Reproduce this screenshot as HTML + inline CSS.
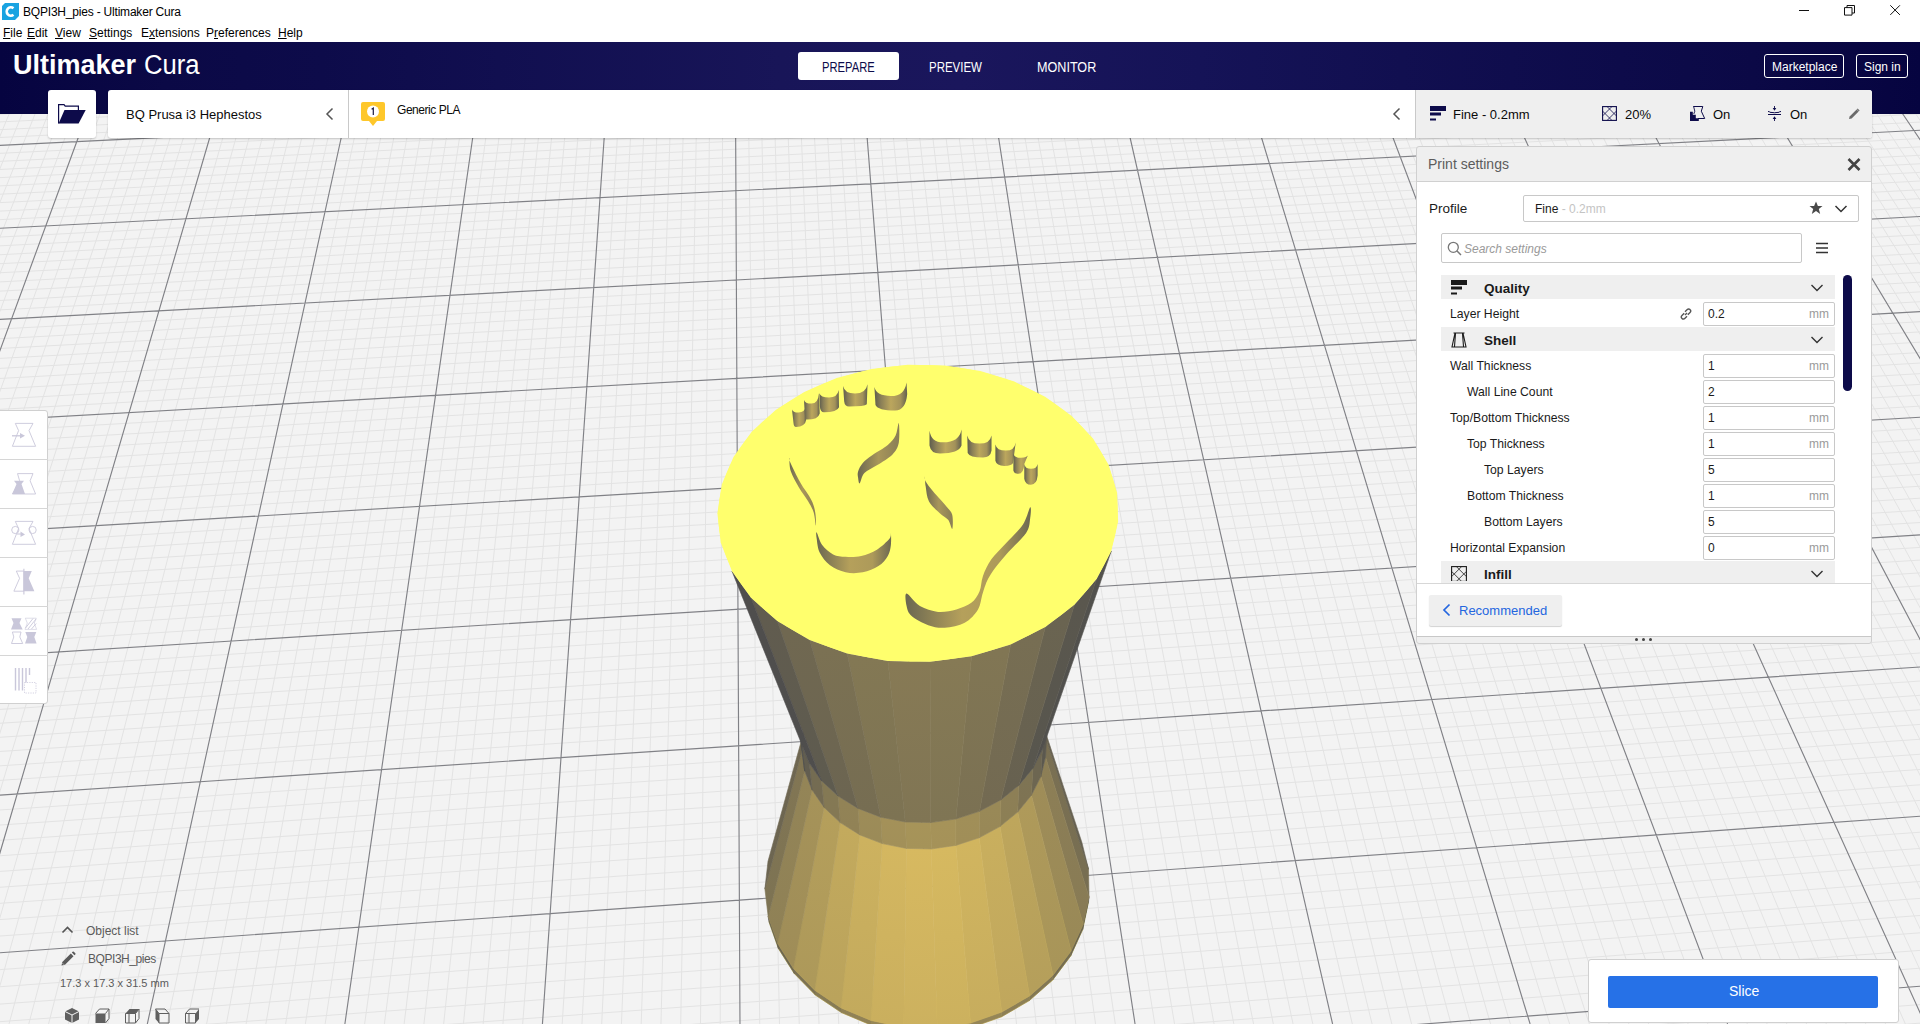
<!DOCTYPE html>
<html><head><meta charset="utf-8"><title>Ultimaker Cura</title>
<style>
*{box-sizing:border-box;margin:0;padding:0}
html,body{width:1920px;height:1024px;overflow:hidden;background:#f3f3f3;font-family:"Liberation Sans",sans-serif;color:#000}
.a{position:absolute}
.t{position:absolute;white-space:nowrap;line-height:1}
#scene{position:absolute;left:0;top:0}
#titlebar{position:absolute;left:0;top:0;width:1920px;height:21px;background:#fff}
#menubar{position:absolute;left:0;top:21px;width:1920px;height:21px;background:#fff}
#header{position:absolute;left:0;top:42px;width:1920px;height:72px;background:linear-gradient(90deg,#060440 0%,#0b0946 8.6%,#0d0b4a 16.7%,#110f50 26%,#181558 40.6%,#1a165c 50%,#151357 62.5%,#110f50 73%,#0d0b4a 84.4%,#0b0946 91.4%,#060440 100%)}
.u{text-decoration:underline;text-underline-offset:1px}
.btnw{position:absolute;border:1px solid #fff;border-radius:3px}
.panel{position:absolute;background:#fff;border:1px solid #d0d0d0;border-radius:3px}
.cat{position:absolute;left:1441px;width:394px;height:24px;background:#efefef}
.inp{position:absolute;left:1703px;width:132px;height:24px;border:1px solid #c8c8c8;border-radius:2px;background:#fff}
.lbl{position:absolute;white-space:nowrap;line-height:1;font-size:12.5px;color:#1a1a1a}
.val{position:absolute;white-space:nowrap;line-height:1;font-size:12px;color:#1a1a1a}
.mm{position:absolute;white-space:nowrap;line-height:1;font-size:12px;color:#9a9a9a}
.tb{position:absolute;left:0;width:48px;height:49px;border-bottom:1px solid #d6d6d6}
</style></head>
<body>
<svg id="scene" width="1920" height="1024" viewBox="0 0 1920 1024">
<path d="M-2.20 110L-386.14 1024M10.75 110L-366.38 1024M23.69 110L-346.62 1024M36.63 110L-326.87 1024M49.58 110L-307.11 1024M62.52 110L-287.35 1024M75.46 110L-267.59 1024M101.35 110L-228.08 1024M114.30 110L-208.32 1024M127.24 110L-188.56 1024M140.18 110L-168.80 1024M153.13 110L-149.04 1024M166.07 110L-129.29 1024M179.01 110L-109.53 1024M191.96 110L-89.77 1024M204.90 110L-70.02 1024M230.79 110L-30.50 1024M243.73 110L-10.74 1024M256.67 110L9.01 1024M269.61 110L28.77 1024M282.56 110L48.53 1024M295.50 110L68.28 1024M308.44 110L88.04 1024M321.39 110L107.80 1024M334.33 110L127.55 1024M360.21 110L167.07 1024M373.16 110L186.82 1024M386.10 110L206.58 1024M399.04 110L226.34 1024M411.99 110L246.09 1024M424.93 110L265.85 1024M437.87 110L285.61 1024M450.81 110L305.36 1024M463.76 110L325.12 1024M489.64 110L364.63 1024M502.58 110L384.39 1024M515.52 110L404.14 1024M528.47 110L423.90 1024M541.41 110L443.65 1024M554.35 110L463.41 1024M567.29 110L483.16 1024M580.23 110L502.92 1024M593.18 110L522.67 1024M619.06 110L562.18 1024M632.00 110L581.94 1024M644.94 110L601.70 1024M657.89 110L621.45 1024M670.83 110L641.21 1024M683.77 110L660.96 1024M696.71 110L680.71 1024M709.65 110L700.47 1024M722.59 110L720.22 1024M748.48 110L759.73 1024M761.42 110L779.49 1024M774.36 110L799.24 1024M787.30 110L819.00 1024M800.24 110L838.75 1024M813.18 110L858.50 1024M826.12 110L878.26 1024M839.06 110L898.01 1024M852.01 110L917.77 1024M877.89 110L957.27 1024M890.83 110L977.03 1024M903.77 110L996.78 1024M916.71 110L1016.54 1024M929.65 110L1036.29 1024M942.59 110L1056.04 1024M955.53 110L1075.80 1024M968.47 110L1095.55 1024M981.41 110L1115.30 1024M1007.29 110L1154.81 1024M1020.24 110L1174.56 1024M1033.18 110L1194.32 1024M1046.12 110L1214.07 1024M1059.06 110L1233.82 1024M1072.00 110L1253.57 1024M1084.94 110L1273.33 1024M1097.88 110L1293.08 1024M1110.82 110L1312.83 1024M1136.70 110L1352.34 1024M1149.64 110L1372.09 1024M1162.58 110L1391.84 1024M1175.52 110L1411.59 1024M1188.46 110L1431.35 1024M1201.40 110L1451.10 1024M1214.34 110L1470.85 1024M1227.28 110L1490.60 1024M1240.22 110L1510.35 1024M1266.10 110L1549.86 1024M1279.04 110L1569.61 1024M1291.97 110L1589.36 1024M1304.91 110L1609.11 1024M1317.85 110L1628.87 1024M1330.79 110L1648.62 1024M1343.73 110L1668.37 1024M1356.67 110L1688.12 1024M1369.61 110L1707.87 1024M1395.49 110L1747.37 1024M1408.43 110L1767.12 1024M1421.37 110L1786.88 1024M1434.31 110L1806.63 1024M1447.25 110L1826.38 1024M1460.18 110L1846.13 1024M1473.12 110L1865.88 1024M1486.06 110L1885.63 1024M1499.00 110L1905.38 1024M1524.88 110L1944.88 1024M1537.82 110L1964.63 1024M1550.76 110L1984.38 1024M1563.70 110L2004.13 1024M1576.63 110L2023.88 1024M1589.57 110L2043.63 1024M1602.51 110L2063.38 1024M1615.45 110L2083.13 1024M1628.39 110L2102.88 1024M1654.26 110L2142.38 1024M1667.20 110L2162.13 1024M1680.14 110L2181.88 1024M1693.08 110L2201.63 1024M1706.02 110L2221.38 1024M1718.95 110L2241.13 1024M1731.89 110L2260.88 1024M1744.83 110L2280.63 1024M1757.77 110L2300.38 1024M1783.64 110L2339.88 1024M1796.58 110L2359.62 1024M1809.52 110L2379.37 1024M1822.46 110L2399.12 1024M1835.40 110L2418.87 1024M1848.33 110L2438.62 1024M1861.27 110L2458.37 1024M1874.21 110L2478.12 1024M1887.15 110L2497.87 1024M1913.02 110L2537.36 1024M0 106.61L1920 15.05M0 114.23L1920 22.26M0 121.91L1920 29.53M0 129.66L1920 36.87M0 137.48L1920 44.27M0 153.32L1920 59.27M0 161.35L1920 66.88M0 169.46L1920 74.55M0 177.63L1920 82.29M0 185.88L1920 90.11M0 194.21L1920 97.99M0 202.62L1920 105.95M0 211.10L1920 113.98M0 219.66L1920 122.09M0 237.03L1920 138.53M0 245.83L1920 146.87M0 254.72L1920 155.29M0 263.69L1920 163.79M0 272.75L1920 172.37M0 281.90L1920 181.03M0 291.14L1920 189.77M0 300.46L1920 198.60M0 309.88L1920 207.52M0 328.99L1920 225.62M0 338.69L1920 234.80M0 348.48L1920 244.08M0 358.38L1920 253.44M0 368.37L1920 262.91M0 378.46L1920 272.46M0 388.66L1920 282.12M0 398.96L1920 291.87M0 409.37L1920 301.73M0 430.51L1920 321.74M0 441.24L1920 331.91M0 452.09L1920 342.18M0 463.05L1920 352.56M0 474.13L1920 363.05M0 485.32L1920 373.65M0 496.64L1920 384.36M0 508.08L1920 395.19M0 519.64L1920 406.14M0 543.14L1920 428.40M0 555.09L1920 439.71M0 567.16L1920 451.14M0 579.38L1920 462.71M0 591.73L1920 474.40M0 604.21L1920 486.23M0 616.84L1920 498.19M0 629.62L1920 510.28M0 642.54L1920 522.51M0 668.83L1920 547.41M0 682.20L1920 560.07M0 695.73L1920 572.88M0 709.42L1920 585.85M0 723.27L1920 598.97M0 737.29L1920 612.24M0 751.48L1920 625.67M0 765.84L1920 639.27M0 780.37L1920 653.03M0 809.97L1920 681.06M0 825.04L1920 695.33M0 840.31L1920 709.78M0 855.76L1920 724.42M0 871.41L1920 739.24M0 887.26L1920 754.24M0 903.31L1920 769.44M0 919.56L1920 784.83M0 936.03L1920 800.42M0 969.61L1920 832.22M0 986.73L1920 848.43M0 1004.08L1920 864.86M0 1021.66L1920 881.51M0 1039.48L1920 898.38M0 1057.54L1920 915.48M0 1075.85L1920 932.82M0 1094.40L1920 950.39M0 1113.22L1920 968.21M0 1151.64L1920 1004.59M0 1171.26L1920 1023.16" stroke="#e3e3e3" stroke-width="1" fill="none"/><path d="M88.41 110L-247.83 1024M217.84 110L-50.26 1024M347.27 110L147.31 1024M476.70 110L344.87 1024M606.12 110L542.43 1024M735.53 110L739.98 1024M864.95 110L937.52 1024M994.35 110L1135.06 1024M1123.76 110L1332.58 1024M1253.16 110L1530.11 1024M1382.55 110L1727.62 1024M1511.94 110L1925.13 1024M1641.33 110L2122.63 1024M1770.71 110L2320.13 1024M1900.08 110L2517.61 1024M0 145.36L1920 51.74M0 228.30L1920 130.27M0 319.39L1920 216.52M0 419.88L1920 311.68M0 531.33L1920 417.21M0 655.61L1920 534.89M0 795.08L1920 666.96M0 952.71L1920 816.22M0 1132.29L1920 986.27" stroke="#808186" stroke-width="1.15" fill="none"/>
<linearGradient id="f1" gradientUnits="userSpaceOnUse" x1="1038.2" y1="916.8" x2="1085.6" y2="915.6"><stop offset="0" stop-color="#fff66b"/><stop offset="1" stop-color="#fff76b"/></linearGradient><path d="M1040.4 907.2L1036.0 926.5L1082.7 929.5L1088.5 901.9Z" fill="url(#f1)" stroke="url(#f1)" stroke-width="0.6"/><linearGradient id="f2" gradientUnits="userSpaceOnUse" x1="1031.6" y1="935.6" x2="1076.7" y2="942.7"><stop offset="0" stop-color="#fff16a"/><stop offset="1" stop-color="#fff26a"/></linearGradient><path d="M1036.0 926.5L1027.3 944.8L1070.7 955.9L1082.7 929.5Z" fill="url(#f2)" stroke="url(#f2)" stroke-width="0.6"/><linearGradient id="f3" gradientUnits="userSpaceOnUse" x1="1020.9" y1="953.1" x2="1061.7" y2="967.9"><stop offset="0" stop-color="#ffec69"/><stop offset="1" stop-color="#ffee69"/></linearGradient><path d="M1027.3 944.8L1014.5 961.4L1052.7 980.0L1070.7 955.9Z" fill="url(#f3)" stroke="url(#f3)" stroke-width="0.6"/><linearGradient id="f4" gradientUnits="userSpaceOnUse" x1="1006.4" y1="968.5" x2="1041.0" y2="990.3"><stop offset="0" stop-color="#ffe968"/><stop offset="1" stop-color="#ffea69"/></linearGradient><path d="M1014.5 961.4L998.2 975.6L1029.3 1000.6L1052.7 980.0Z" fill="url(#f4)" stroke="url(#f4)" stroke-width="0.6"/><linearGradient id="f5" gradientUnits="userSpaceOnUse" x1="988.5" y1="981.1" x2="1015.5" y2="1008.7"><stop offset="0" stop-color="#ffe668"/><stop offset="1" stop-color="#ffe768"/></linearGradient><path d="M998.2 975.6L978.8 986.7L1001.5 1016.8L1029.3 1000.6Z" fill="url(#f5)" stroke="url(#f5)" stroke-width="0.6"/><linearGradient id="f6" gradientUnits="userSpaceOnUse" x1="968.1" y1="990.4" x2="986.0" y2="1022.3"><stop offset="0" stop-color="#ffe368"/><stop offset="1" stop-color="#ffe568"/></linearGradient><path d="M978.8 986.7L957.3 994.1L970.4 1027.8L1001.5 1016.8Z" fill="url(#f6)" stroke="url(#f6)" stroke-width="0.6"/><linearGradient id="f7" gradientUnits="userSpaceOnUse" x1="946.0" y1="995.9" x2="953.9" y2="1030.4"><stop offset="0" stop-color="#ffe267"/><stop offset="1" stop-color="#ffe468"/></linearGradient><path d="M957.3 994.1L934.6 997.7L937.4 1032.9L970.4 1027.8Z" fill="url(#f7)" stroke="url(#f7)" stroke-width="0.6"/><linearGradient id="f8" gradientUnits="userSpaceOnUse" x1="923.0" y1="997.4" x2="920.6" y2="1032.5"><stop offset="0" stop-color="#ffe267"/><stop offset="1" stop-color="#ffe468"/></linearGradient><path d="M934.6 997.7L911.5 997.1L903.9 1032.1L937.4 1032.9Z" fill="url(#f8)" stroke="url(#f8)" stroke-width="0.6"/><linearGradient id="f9" gradientUnits="userSpaceOnUse" x1="900.3" y1="994.7" x2="887.7" y2="1028.6"><stop offset="0" stop-color="#ffe367"/><stop offset="1" stop-color="#ffe568"/></linearGradient><path d="M911.5 997.1L889.1 992.4L871.5 1025.2L903.9 1032.1Z" fill="url(#f9)" stroke="url(#f9)" stroke-width="0.6"/><linearGradient id="f10" gradientUnits="userSpaceOnUse" x1="878.7" y1="988.1" x2="856.5" y2="1018.9"><stop offset="0" stop-color="#ffe568"/><stop offset="1" stop-color="#ffe668"/></linearGradient><path d="M889.1 992.4L868.4 983.8L841.5 1012.6L871.5 1025.2Z" fill="url(#f10)" stroke="url(#f10)" stroke-width="0.6"/><linearGradient id="f11" gradientUnits="userSpaceOnUse" x1="859.3" y1="977.8" x2="828.4" y2="1003.8"><stop offset="0" stop-color="#ffe768"/><stop offset="1" stop-color="#ffe969"/></linearGradient><path d="M868.4 983.8L850.2 971.8L815.4 995.1L841.5 1012.6Z" fill="url(#f11)" stroke="url(#f11)" stroke-width="0.6"/><linearGradient id="f12" gradientUnits="userSpaceOnUse" x1="842.7" y1="964.3" x2="804.7" y2="984.2"><stop offset="0" stop-color="#ffeb69"/><stop offset="1" stop-color="#ffec69"/></linearGradient><path d="M850.2 971.8L835.2 956.9L794.1 973.3L815.4 995.1Z" fill="url(#f12)" stroke="url(#f12)" stroke-width="0.6"/><linearGradient id="f13" gradientUnits="userSpaceOnUse" x1="829.6" y1="948.2" x2="786.2" y2="960.9"><stop offset="0" stop-color="#ffef6a"/><stop offset="1" stop-color="#fff06a"/></linearGradient><path d="M835.2 956.9L824.0 939.7L778.4 948.5L794.1 973.3Z" fill="url(#f13)" stroke="url(#f13)" stroke-width="0.6"/><linearGradient id="f14" gradientUnits="userSpaceOnUse" x1="820.5" y1="930.3" x2="773.6" y2="935.0"><stop offset="0" stop-color="#fff46a"/><stop offset="1" stop-color="#fff56b"/></linearGradient><path d="M824.0 939.7L817.1 921.0L768.9 921.6L778.4 948.5Z" fill="url(#f14)" stroke="url(#f14)" stroke-width="0.6"/><path d="M1088.5 901.9L1082.7 929.5L1083.2 924.6L1089.0 896.9Z" fill="#55534e" stroke="#55534e" stroke-width="0.6"/><path d="M1082.7 929.5L1070.7 955.9L1071.1 951.1L1083.2 924.6Z" fill="#666050" stroke="#666050" stroke-width="0.6"/><linearGradient id="f15" gradientUnits="userSpaceOnUse" x1="1061.7" y1="967.9" x2="1062.1" y2="963.1"><stop offset="0" stop-color="#756c52"/><stop offset="1" stop-color="#756d52"/></linearGradient><path d="M1070.7 955.9L1052.7 980.0L1053.0 975.2L1071.1 951.1Z" fill="url(#f15)" stroke="url(#f15)" stroke-width="0.6"/><linearGradient id="f16" gradientUnits="userSpaceOnUse" x1="1041.0" y1="990.3" x2="1041.4" y2="985.5"><stop offset="0" stop-color="#827754"/><stop offset="1" stop-color="#837754"/></linearGradient><path d="M1052.7 980.0L1029.3 1000.6L1029.6 995.9L1053.0 975.2Z" fill="url(#f16)" stroke="url(#f16)" stroke-width="0.6"/><linearGradient id="f17" gradientUnits="userSpaceOnUse" x1="1015.5" y1="1008.7" x2="1015.7" y2="1003.9"><stop offset="0" stop-color="#8d7f56"/><stop offset="1" stop-color="#8d8056"/></linearGradient><path d="M1029.3 1000.6L1001.5 1016.8L1001.7 1012.1L1029.6 995.9Z" fill="url(#f17)" stroke="url(#f17)" stroke-width="0.6"/><linearGradient id="f18" gradientUnits="userSpaceOnUse" x1="986.0" y1="1022.3" x2="986.1" y2="1017.6"><stop offset="0" stop-color="#958557"/><stop offset="1" stop-color="#958657"/></linearGradient><path d="M1001.5 1016.8L970.4 1027.8L970.5 1023.1L1001.7 1012.1Z" fill="url(#f18)" stroke="url(#f18)" stroke-width="0.6"/><path d="M970.4 1027.8L937.4 1032.9L937.3 1028.3L970.5 1023.1Z" fill="#998957" stroke="#998957" stroke-width="0.6"/><linearGradient id="f19" gradientUnits="userSpaceOnUse" x1="920.6" y1="1032.5" x2="920.5" y2="1027.8"><stop offset="0" stop-color="#9a8957"/><stop offset="1" stop-color="#9a8a57"/></linearGradient><path d="M937.4 1032.9L903.9 1032.1L903.7 1027.4L937.3 1028.3Z" fill="url(#f19)" stroke="url(#f19)" stroke-width="0.6"/><path d="M903.9 1032.1L871.5 1025.2L871.1 1020.5L903.7 1027.4Z" fill="#978757" stroke="#978757" stroke-width="0.6"/><path d="M871.5 1025.2L841.5 1012.6L841.1 1007.9L871.1 1020.5Z" fill="#918256" stroke="#918256" stroke-width="0.6"/><path d="M841.5 1012.6L815.4 995.1L814.8 990.3L841.1 1007.9Z" fill="#877b55" stroke="#877b55" stroke-width="0.6"/><path d="M815.4 995.1L794.1 973.3L793.4 968.5L814.8 990.3Z" fill="#7b7153" stroke="#7b7153" stroke-width="0.6"/><path d="M794.1 973.3L778.4 948.5L777.7 943.6L793.4 968.5Z" fill="#6c6551" stroke="#6c6551" stroke-width="0.6"/><path d="M778.4 948.5L768.9 921.6L768.2 916.7L777.7 943.6Z" fill="#5c584f" stroke="#5c584f" stroke-width="0.6"/><linearGradient id="f20" gradientUnits="userSpaceOnUse" x1="1088.7" y1="883.0" x2="1045.5" y2="747.1"><stop offset="0" stop-color="#776e52"/><stop offset="1" stop-color="#7a7053"/></linearGradient><path d="M1088.5 869.2L1089.0 896.9L1045.5 757.0L1045.5 737.2Z" fill="url(#f20)" stroke="url(#f20)" stroke-width="0.6"/><linearGradient id="f21" gradientUnits="userSpaceOnUse" x1="1086.1" y1="910.7" x2="1043.2" y2="766.8"><stop offset="0" stop-color="#887b55"/><stop offset="1" stop-color="#8d7f56"/></linearGradient><path d="M1089.0 896.9L1083.2 924.6L1040.8 776.6L1045.5 757.0Z" fill="url(#f21)" stroke="url(#f21)" stroke-width="0.6"/><linearGradient id="f22" gradientUnits="userSpaceOnUse" x1="1077.2" y1="937.8" x2="1036.1" y2="785.9"><stop offset="0" stop-color="#998957"/><stop offset="1" stop-color="#9f8d58"/></linearGradient><path d="M1083.2 924.6L1071.1 951.1L1031.4 795.2L1040.8 776.6Z" fill="url(#f22)" stroke="url(#f22)" stroke-width="0.6"/><linearGradient id="f23" gradientUnits="userSpaceOnUse" x1="1062.1" y1="963.1" x2="1024.6" y2="803.6"><stop offset="0" stop-color="#a89559"/><stop offset="1" stop-color="#af9a5a"/></linearGradient><path d="M1071.1 951.1L1053.0 975.2L1017.7 812.1L1031.4 795.2Z" fill="url(#f23)" stroke="url(#f23)" stroke-width="0.6"/><linearGradient id="f24" gradientUnits="userSpaceOnUse" x1="1041.4" y1="985.5" x2="1008.9" y2="819.3"><stop offset="0" stop-color="#b59f5b"/><stop offset="1" stop-color="#bea65c"/></linearGradient><path d="M1053.0 975.2L1029.6 995.9L1000.0 826.5L1017.7 812.1Z" fill="url(#f24)" stroke="url(#f24)" stroke-width="0.6"/><linearGradient id="f25" gradientUnits="userSpaceOnUse" x1="1015.7" y1="1003.9" x2="989.6" y2="832.1"><stop offset="0" stop-color="#c0a75d"/><stop offset="1" stop-color="#c9af5e"/></linearGradient><path d="M1029.6 995.9L1001.7 1012.1L979.2 837.8L1000.0 826.5Z" fill="url(#f25)" stroke="url(#f25)" stroke-width="0.6"/><linearGradient id="f26" gradientUnits="userSpaceOnUse" x1="986.1" y1="1017.6" x2="967.6" y2="841.6"><stop offset="0" stop-color="#c7ad5e"/><stop offset="1" stop-color="#d1b55f"/></linearGradient><path d="M1001.7 1012.1L970.5 1023.1L955.9 845.4L979.2 837.8Z" fill="url(#f26)" stroke="url(#f26)" stroke-width="0.6"/><linearGradient id="f27" gradientUnits="userSpaceOnUse" x1="953.9" y1="1025.7" x2="943.6" y2="847.2"><stop offset="0" stop-color="#ccb15e"/><stop offset="1" stop-color="#d6b960"/></linearGradient><path d="M970.5 1023.1L937.3 1028.3L931.3 849.0L955.9 845.4Z" fill="url(#f27)" stroke="url(#f27)" stroke-width="0.6"/><linearGradient id="f28" gradientUnits="userSpaceOnUse" x1="920.5" y1="1027.8" x2="918.8" y2="848.7"><stop offset="0" stop-color="#ccb15f"/><stop offset="1" stop-color="#d7b960"/></linearGradient><path d="M937.3 1028.3L903.7 1027.4L906.4 848.4L931.3 849.0Z" fill="url(#f28)" stroke="url(#f28)" stroke-width="0.6"/><linearGradient id="f29" gradientUnits="userSpaceOnUse" x1="887.4" y1="1023.9" x2="894.3" y2="846.0"><stop offset="0" stop-color="#caaf5e"/><stop offset="1" stop-color="#d4b760"/></linearGradient><path d="M903.7 1027.4L871.1 1020.5L882.2 843.6L906.4 848.4Z" fill="url(#f29)" stroke="url(#f29)" stroke-width="0.6"/><linearGradient id="f30" gradientUnits="userSpaceOnUse" x1="856.1" y1="1014.2" x2="871.0" y2="839.2"><stop offset="0" stop-color="#c3aa5d"/><stop offset="1" stop-color="#cdb25f"/></linearGradient><path d="M871.1 1020.5L841.1 1007.9L859.8 834.9L882.2 843.6Z" fill="url(#f30)" stroke="url(#f30)" stroke-width="0.6"/><linearGradient id="f31" gradientUnits="userSpaceOnUse" x1="827.9" y1="999.1" x2="850.0" y2="828.7"><stop offset="0" stop-color="#baa35c"/><stop offset="1" stop-color="#c3aa5d"/></linearGradient><path d="M841.1 1007.9L814.8 990.3L840.2 822.6L859.8 834.9Z" fill="url(#f31)" stroke="url(#f31)" stroke-width="0.6"/><linearGradient id="f32" gradientUnits="userSpaceOnUse" x1="804.1" y1="979.4" x2="832.1" y2="815.0"><stop offset="0" stop-color="#ad995a"/><stop offset="1" stop-color="#b59f5b"/></linearGradient><path d="M814.8 990.3L793.4 968.5L824.1 807.4L840.2 822.6Z" fill="url(#f32)" stroke="url(#f32)" stroke-width="0.6"/><linearGradient id="f33" gradientUnits="userSpaceOnUse" x1="785.5" y1="956.0" x2="818.1" y2="798.7"><stop offset="0" stop-color="#9f8d58"/><stop offset="1" stop-color="#a69359"/></linearGradient><path d="M793.4 968.5L777.7 943.6L812.1 790.0L824.1 807.4Z" fill="url(#f33)" stroke="url(#f33)" stroke-width="0.6"/><linearGradient id="f34" gradientUnits="userSpaceOnUse" x1="772.9" y1="930.1" x2="808.4" y2="780.4"><stop offset="0" stop-color="#8f8156"/><stop offset="1" stop-color="#948557"/></linearGradient><path d="M777.7 943.6L768.2 916.7L804.7 771.0L812.1 790.0Z" fill="url(#f34)" stroke="url(#f34)" stroke-width="0.6"/><linearGradient id="f35" gradientUnits="userSpaceOnUse" x1="766.5" y1="902.7" x2="803.3" y2="761.1"><stop offset="0" stop-color="#7d7353"/><stop offset="1" stop-color="#827654"/></linearGradient><path d="M768.2 916.7L764.9 888.9L801.9 751.3L804.7 771.0Z" fill="url(#f35)" stroke="url(#f35)" stroke-width="0.6"/><linearGradient id="f36" gradientUnits="userSpaceOnUse" x1="766.5" y1="875.0" x2="802.9" y2="741.4"><stop offset="0" stop-color="#6c6551"/><stop offset="1" stop-color="#6f6751"/></linearGradient><path d="M764.9 888.9L768.0 861.3L803.9 731.6L801.9 751.3Z" fill="url(#f36)" stroke="url(#f36)" stroke-width="0.6"/><linearGradient id="f37" gradientUnits="userSpaceOnUse" x1="1085.2" y1="855.7" x2="1043.1" y2="727.6"><stop offset="0" stop-color="#656050"/><stop offset="1" stop-color="#676150"/></linearGradient><path d="M1081.9 842.4L1088.5 869.2L1045.5 737.2L1040.8 718.1Z" fill="url(#f37)" stroke="url(#f37)" stroke-width="0.6"/><linearGradient id="f38" gradientUnits="userSpaceOnUse" x1="1043.2" y1="766.8" x2="1044.7" y2="739.7"><stop offset="0" stop-color="#5b584e"/><stop offset="1" stop-color="#5b584f"/></linearGradient><path d="M1045.5 757.0L1040.8 776.6L1042.3 749.6L1047.1 729.9Z" fill="url(#f38)" stroke="url(#f38)" stroke-width="0.6"/><path d="M1040.8 776.6L1031.4 795.2L1032.8 768.4L1042.3 749.6Z" fill="#6d6651" stroke="#6d6651" stroke-width="0.6"/><linearGradient id="f39" gradientUnits="userSpaceOnUse" x1="1024.6" y1="803.6" x2="1025.8" y2="776.9"><stop offset="0" stop-color="#7e7353"/><stop offset="1" stop-color="#7e7454"/></linearGradient><path d="M1031.4 795.2L1017.7 812.1L1018.8 785.4L1032.8 768.4Z" fill="url(#f39)" stroke="url(#f39)" stroke-width="0.6"/><linearGradient id="f40" gradientUnits="userSpaceOnUse" x1="1008.9" y1="819.3" x2="1009.8" y2="792.6"><stop offset="0" stop-color="#8c7f55"/><stop offset="1" stop-color="#8d7f56"/></linearGradient><path d="M1017.7 812.1L1000.0 826.5L1000.8 799.9L1018.8 785.4Z" fill="url(#f40)" stroke="url(#f40)" stroke-width="0.6"/><linearGradient id="f41" gradientUnits="userSpaceOnUse" x1="989.6" y1="832.1" x2="990.2" y2="805.6"><stop offset="0" stop-color="#988857"/><stop offset="1" stop-color="#998957"/></linearGradient><path d="M1000.0 826.5L979.2 837.8L979.5 811.3L1000.8 799.9Z" fill="url(#f41)" stroke="url(#f41)" stroke-width="0.6"/><linearGradient id="f42" gradientUnits="userSpaceOnUse" x1="967.6" y1="841.6" x2="967.7" y2="815.1"><stop offset="0" stop-color="#a08e58"/><stop offset="1" stop-color="#a18f58"/></linearGradient><path d="M979.2 837.8L955.9 845.4L955.9 819.0L979.5 811.3Z" fill="url(#f42)" stroke="url(#f42)" stroke-width="0.6"/><linearGradient id="f43" gradientUnits="userSpaceOnUse" x1="943.6" y1="847.2" x2="943.3" y2="820.8"><stop offset="0" stop-color="#a59259"/><stop offset="1" stop-color="#a69359"/></linearGradient><path d="M955.9 845.4L931.3 849.0L930.8 822.6L955.9 819.0Z" fill="url(#f43)" stroke="url(#f43)" stroke-width="0.6"/><linearGradient id="f44" gradientUnits="userSpaceOnUse" x1="918.8" y1="848.7" x2="918.0" y2="822.3"><stop offset="0" stop-color="#a59359"/><stop offset="1" stop-color="#a79459"/></linearGradient><path d="M931.3 849.0L906.4 848.4L905.3 822.0L930.8 822.6Z" fill="url(#f44)" stroke="url(#f44)" stroke-width="0.6"/><linearGradient id="f45" gradientUnits="userSpaceOnUse" x1="894.3" y1="846.0" x2="893.0" y2="819.6"><stop offset="0" stop-color="#a29059"/><stop offset="1" stop-color="#a49159"/></linearGradient><path d="M906.4 848.4L882.2 843.6L880.7 817.2L905.3 822.0Z" fill="url(#f45)" stroke="url(#f45)" stroke-width="0.6"/><linearGradient id="f46" gradientUnits="userSpaceOnUse" x1="871.0" y1="839.2" x2="869.3" y2="812.8"><stop offset="0" stop-color="#9b8b58"/><stop offset="1" stop-color="#9d8c58"/></linearGradient><path d="M882.2 843.6L859.8 834.9L857.9 808.4L880.7 817.2Z" fill="url(#f46)" stroke="url(#f46)" stroke-width="0.6"/><linearGradient id="f47" gradientUnits="userSpaceOnUse" x1="850.0" y1="828.7" x2="847.9" y2="802.2"><stop offset="0" stop-color="#918256"/><stop offset="1" stop-color="#928356"/></linearGradient><path d="M859.8 834.9L840.2 822.6L837.9 796.0L857.9 808.4Z" fill="url(#f47)" stroke="url(#f47)" stroke-width="0.6"/><linearGradient id="f48" gradientUnits="userSpaceOnUse" x1="832.1" y1="815.0" x2="829.7" y2="788.3"><stop offset="0" stop-color="#847854"/><stop offset="1" stop-color="#847954"/></linearGradient><path d="M840.2 822.6L824.1 807.4L821.5 780.7L837.9 796.0Z" fill="url(#f48)" stroke="url(#f48)" stroke-width="0.6"/><linearGradient id="f49" gradientUnits="userSpaceOnUse" x1="818.1" y1="798.7" x2="815.4" y2="771.9"><stop offset="0" stop-color="#746b52"/><stop offset="1" stop-color="#746c52"/></linearGradient><path d="M824.1 807.4L812.1 790.0L809.3 763.1L821.5 780.7Z" fill="url(#f49)" stroke="url(#f49)" stroke-width="0.6"/><linearGradient id="f50" gradientUnits="userSpaceOnUse" x1="808.4" y1="780.4" x2="805.5" y2="753.5"><stop offset="0" stop-color="#625d50"/><stop offset="1" stop-color="#625e50"/></linearGradient><path d="M812.1 790.0L804.7 771.0L801.7 744.0L809.3 763.1Z" fill="url(#f50)" stroke="url(#f50)" stroke-width="0.6"/><path d="M804.7 771.0L801.9 751.3L799.0 724.1L801.7 744.0Z" fill="#4f4f4d" stroke="#4f4f4d" stroke-width="0.6"/><linearGradient id="f51" gradientUnits="userSpaceOnUse" x1="1037.6" y1="759.0" x2="1104.0" y2="565.0"><stop offset="0" stop-color="#51504d"/><stop offset="1" stop-color="#52514d"/></linearGradient><path d="M1042.3 749.6L1032.8 768.4L1096.6 579.1L1111.3 551.0Z" fill="url(#f51)" stroke="url(#f51)" stroke-width="0.6"/><linearGradient id="f52" gradientUnits="userSpaceOnUse" x1="1025.8" y1="776.9" x2="1085.6" y2="591.9"><stop offset="0" stop-color="#58564e"/><stop offset="1" stop-color="#5a574e"/></linearGradient><path d="M1032.8 768.4L1018.8 785.4L1074.4 604.8L1096.6 579.1Z" fill="url(#f52)" stroke="url(#f52)" stroke-width="0.6"/><linearGradient id="f53" gradientUnits="userSpaceOnUse" x1="1009.8" y1="792.6" x2="1059.9" y2="615.8"><stop offset="0" stop-color="#676150"/><stop offset="1" stop-color="#6a6451"/></linearGradient><path d="M1018.8 785.4L1000.8 799.9L1045.3 627.0L1074.4 604.8Z" fill="url(#f53)" stroke="url(#f53)" stroke-width="0.6"/><linearGradient id="f54" gradientUnits="userSpaceOnUse" x1="990.2" y1="805.6" x2="1028.0" y2="635.6"><stop offset="0" stop-color="#736a52"/><stop offset="1" stop-color="#776e53"/></linearGradient><path d="M1000.8 799.9L979.5 811.3L1010.6 644.4L1045.3 627.0Z" fill="url(#f54)" stroke="url(#f54)" stroke-width="0.6"/><linearGradient id="f55" gradientUnits="userSpaceOnUse" x1="967.7" y1="815.1" x2="991.1" y2="650.3"><stop offset="0" stop-color="#7b7153"/><stop offset="1" stop-color="#817654"/></linearGradient><path d="M979.5 811.3L955.9 819.0L971.5 656.2L1010.6 644.4Z" fill="url(#f55)" stroke="url(#f55)" stroke-width="0.6"/><linearGradient id="f56" gradientUnits="userSpaceOnUse" x1="943.3" y1="820.8" x2="950.8" y2="659.0"><stop offset="0" stop-color="#7f7554"/><stop offset="1" stop-color="#867a55"/></linearGradient><path d="M955.9 819.0L930.8 822.6L930.0 661.8L971.5 656.2Z" fill="url(#f56)" stroke="url(#f56)" stroke-width="0.6"/><linearGradient id="f57" gradientUnits="userSpaceOnUse" x1="918.0" y1="822.3" x2="908.9" y2="661.4"><stop offset="0" stop-color="#807554"/><stop offset="1" stop-color="#877a55"/></linearGradient><path d="M930.8 822.6L905.3 822.0L887.9 660.9L930.0 661.8Z" fill="url(#f57)" stroke="url(#f57)" stroke-width="0.6"/><linearGradient id="f58" gradientUnits="userSpaceOnUse" x1="893.0" y1="819.6" x2="867.5" y2="657.1"><stop offset="0" stop-color="#7d7353"/><stop offset="1" stop-color="#837854"/></linearGradient><path d="M905.3 822.0L880.7 817.2L847.2 653.4L887.9 660.9Z" fill="url(#f58)" stroke="url(#f58)" stroke-width="0.6"/><linearGradient id="f59" gradientUnits="userSpaceOnUse" x1="869.3" y1="812.8" x2="828.4" y2="646.6"><stop offset="0" stop-color="#766d52"/><stop offset="1" stop-color="#7b7153"/></linearGradient><path d="M880.7 817.2L857.9 808.4L809.7 639.9L847.2 653.4Z" fill="url(#f59)" stroke="url(#f59)" stroke-width="0.6"/><linearGradient id="f60" gradientUnits="userSpaceOnUse" x1="847.9" y1="802.2" x2="793.4" y2="630.4"><stop offset="0" stop-color="#6c6551"/><stop offset="1" stop-color="#706851"/></linearGradient><path d="M857.9 808.4L837.9 796.0L777.3 621.0L809.7 639.9Z" fill="url(#f60)" stroke="url(#f60)" stroke-width="0.6"/><linearGradient id="f61" gradientUnits="userSpaceOnUse" x1="829.7" y1="788.3" x2="764.1" y2="609.3"><stop offset="0" stop-color="#5e5b4f"/><stop offset="1" stop-color="#615c4f"/></linearGradient><path d="M837.9 796.0L821.5 780.7L751.0 597.7L777.3 621.0Z" fill="url(#f61)" stroke="url(#f61)" stroke-width="0.6"/><path d="M821.5 780.7L809.3 763.1L732.0 571.2L751.0 597.7Z" fill="#4f4e4d" stroke="#4f4e4d" stroke-width="0.6"/><path d="M1117.1 492.7L1118.1 521.8L1111.3 551.0L1096.6 579.1L1074.4 604.8L1045.3 627.0L1010.6 644.4L971.5 656.2L930.0 661.8L887.9 660.9L847.2 653.4L809.7 639.9L777.3 621.0L751.0 597.7L732.0 571.2L720.7 542.6L717.4 513.3L721.8 484.4L733.5 456.9L751.7 431.8L775.7 409.9L804.3 391.9L836.7 378.1L871.6 369.0L907.9 364.7L944.6 365.4L980.4 371.1L1014.3 381.6L1045.1 396.7L1071.7 415.9L1093.2 438.8L1108.6 464.7Z" fill="#ffff6d"/><path d="M1115.9 491.5L1116.9 498.6L1117.5 505.9L1117.6 513.2L1117.2 520.5L1116.4 527.8L1115.0 535.1L1113.1 542.3L1110.8 549.6L1107.9 556.7L1104.6 563.8L1100.8 570.7L1096.5 577.6L1091.8 584.3L1086.5 590.8L1080.8 597.1L1074.7 603.3L1068.2 609.2L1061.2 614.9L1053.8 620.3L1046.1 625.5L1038.0 630.3L1029.5 634.9L1020.8 639.1L1011.7 643.0L1002.4 646.6L992.8 649.8L983.0 652.6L973.0 655.1L962.9 657.1L952.6 658.8L942.2 660.0L931.8 660.9L921.3 661.3L910.8 661.4L900.3 661.0L889.9 660.2L879.5 659.1L869.3 657.5L859.2 655.5L849.3 653.1L839.5 650.4L830.0 647.2L820.8 643.7L811.8 639.9L803.2 635.7L794.9 631.2L786.9 626.4L779.3 621.3L772.0 615.9L765.2 610.3L758.8 604.4L752.9 598.3L747.3 592.0L742.3 585.5L737.7 578.9L733.6 572.1L730.0 565.1L726.8 558.1L724.2 550.9L722.0 543.7L720.4 536.5L719.2 529.2L718.5 521.9L718.3 514.5L718.6 507.3L719.4 500.0L720.7 492.8L722.4 485.7L724.5 478.7L727.2 471.8L730.2 465.0L733.7 458.3L737.6 451.8L741.8 445.4L746.5 439.2L751.6 433.2L757.0 427.4L762.7 421.8L768.8 416.4L775.2 411.3L781.8 406.3L788.8 401.7L796.0 397.2L803.5 393.1L811.2 389.2L819.1 385.6L827.3 382.2L835.6 379.2L844.0 376.4L852.6 373.9L861.4 371.7L870.2 369.9L879.2 368.3L888.2 367.0L897.3 366.1L906.4 365.4L915.5 365.1L924.7 365.0L933.8 365.3L942.9 365.9L951.9 366.8L960.9 368.0L969.8 369.5L978.6 371.4L987.3 373.5L995.8 375.9L1004.2 378.6L1012.4 381.6L1020.5 384.9L1028.3 388.5L1035.9 392.3L1043.2 396.4L1050.3 400.8L1057.2 405.4L1063.7 410.3L1069.9 415.4L1075.9 420.8L1081.4 426.3L1086.7 432.1L1091.5 438.1L1096.0 444.2L1100.1 450.5L1103.8 457.0L1107.1 463.7L1110.0 470.5L1112.4 477.4L1114.4 484.4Z" fill="#ffff6d"/>
<defs><linearGradient id="tg" x1="0" y1="0" x2="1" y2="0"><stop offset="0" stop-color="#5f5d4e"/><stop offset="0.2" stop-color="#8a7f57"/><stop offset="0.5" stop-color="#bba65d"/><stop offset="0.8" stop-color="#a3925a"/><stop offset="1" stop-color="#62604f"/></linearGradient><linearGradient id="sg" x1="0" y1="0" x2="1" y2="0"><stop offset="0" stop-color="#6c6852"/><stop offset="0.5" stop-color="#a8965a"/><stop offset="1" stop-color="#8a7e56"/></linearGradient><linearGradient id="hg" x1="0" y1="0" x2="1" y2="0"><stop offset="0" stop-color="#6a6751"/><stop offset="0.45" stop-color="#b5a05b"/><stop offset="0.75" stop-color="#ad9a5a"/><stop offset="1" stop-color="#6c6852"/></linearGradient></defs><path d="M792.0 409.4Q792.8 412.5 798.5 412.5Q804.9 412.5 805.8 406.0L806.3 419.6Q805.1 427.0 796.0 427.0Q793.8 427.0 793.5 423.0Z" fill="url(#tg)"/><path d="M804.0 399.9Q804.9 403.6 811.5 403.6Q818.1 403.6 819.0 393.3L819.7 413.4Q818.2 419.6 807.0 419.6Q805.1 419.6 804.8 414.0Z" fill="url(#tg)"/><path d="M819.4 393.3Q820.6 397.5 829.0 397.5Q837.5 397.5 838.7 390.0L839.0 407.2Q837.2 412.3 824.0 412.3Q820.3 412.3 819.8 406.0Z" fill="url(#tg)"/><path d="M843.1 386.0Q844.5 393.5 855.0 393.5Q866.0 393.5 867.5 384.2L866.8 404.3Q864.7 406.5 849.0 406.5Q844.8 406.5 844.2 401.4Z" fill="url(#tg)"/><path d="M874.4 387.1Q876.4 396.0 891.0 396.0Q904.6 396.0 906.5 382.4L907.2 394.1Q905.8 410.5 895.2 410.5Q877.9 410.5 875.5 405.0Z" fill="url(#tg)"/><path d="M929.5 430.4Q931.1 442.3 943.1 442.3Q959.3 442.3 961.5 429.4L961.5 445.6Q958.9 453.5 940.0 453.5Q930.8 453.5 929.5 445.4Z" fill="url(#tg)"/><path d="M967.3 435.4Q968.8 443.6 979.4 443.6Q990.0 443.6 991.5 435.4L991.5 450.6Q990.5 457.5 983.0 457.5Q969.5 457.5 967.7 453.0Z" fill="url(#tg)"/><path d="M995.4 444.4Q996.7 450.6 1005.9 450.6Q1014.5 450.6 1015.7 442.4L1013.0 463.1Q1012.0 465.9 1004.4 465.9Q996.5 465.9 995.4 460.8Z" fill="url(#tg)"/><path d="M1013.4 453.8Q1014.3 457.8 1021.0 457.8Q1027.7 457.8 1028.6 453.4L1024.3 463.9Q1023.6 473.8 1018.5 473.8Q1014.0 473.8 1013.4 470.5Z" fill="url(#tg)"/><path d="M1024.3 463.9Q1025.1 468.8 1031.0 468.8Q1036.8 468.8 1037.6 463.9L1037.6 475.6Q1036.8 484.8 1031.0 484.8Q1025.1 484.8 1024.3 478.8Z" fill="url(#tg)"/><path d="M789.4 458.3C789.5 459.9 789.3 466.8 790.9 471.6C792.5 476.4 795.9 482.3 798.8 487.2C801.6 492.1 805.6 497.1 808.1 501.2C810.6 505.4 812.3 508.2 813.6 512.2C814.9 516.2 815.6 525.5 815.9 525.5C816.2 525.5 816.0 516.5 815.2 512.2C814.4 507.9 813.7 504.6 811.2 499.7C808.8 494.8 803.8 488.8 800.3 482.5C796.8 476.2 792.0 466.2 790.2 462.2C788.4 458.2 789.3 456.7 789.4 458.3Z" fill="url(#sg)"/><path d="M898.8 423.1C898.2 421.9 897.4 432.0 895.6 435.6C893.8 439.2 891.7 441.7 887.8 445.0C883.9 448.3 876.4 452.2 872.2 455.2C868.0 458.2 865.1 460.3 862.8 463.0C860.4 465.7 858.9 469.1 858.1 471.6C857.3 474.1 857.8 475.9 858.1 477.8C858.4 479.8 858.7 484.1 859.7 483.3C860.8 482.5 861.5 476.1 864.4 473.1C867.3 470.1 872.2 468.4 876.9 465.3C881.6 462.2 888.9 458.2 892.5 454.4C896.1 450.6 897.7 447.9 898.8 442.7C899.8 437.5 899.3 424.3 898.8 423.1Z" fill="url(#sg)"/><path d="M924.9 476.6C924.9 477.4 925.0 482.5 925.7 486.6C926.4 490.8 926.6 497.1 929.0 501.5C931.4 505.9 936.6 510.2 939.8 513.2C943.0 516.2 946.0 517.2 948.1 519.8C950.2 522.4 951.5 529.7 952.2 528.9C952.9 528.1 953.2 518.5 952.2 514.8C951.2 511.1 949.6 510.4 946.4 506.5C943.2 502.6 936.7 495.8 933.2 491.6C929.8 487.5 927.1 484.1 925.7 481.6C924.3 479.1 924.9 475.8 924.9 476.6Z" fill="url(#sg)"/><path d="M816.7 532.5C817.6 533.5 819.5 541.4 822.2 545.0C824.9 548.6 829.2 552.4 833.1 554.4C837.0 556.4 840.9 556.5 845.6 556.7C850.3 557.0 856.0 557.1 861.2 555.9C866.5 554.7 872.2 552.6 876.9 549.7C881.6 546.8 887.1 541.5 889.4 538.8C891.7 536.0 890.6 532.3 890.9 533.3C891.1 534.3 891.4 541.2 890.9 545.0C890.4 548.8 889.9 552.4 887.8 555.9C885.7 559.4 882.6 563.4 878.4 566.1C874.2 568.8 868.3 571.3 862.8 572.3C857.3 573.3 851.1 573.5 845.6 572.3C840.1 571.1 834.3 568.5 830.0 565.3C825.7 562.0 822.0 557.2 819.8 552.8C817.6 548.4 817.2 542.1 816.7 538.8C816.2 535.4 815.8 531.5 816.7 532.5Z" fill="url(#hg)"/><path d="M1030.2 507.3C1029.0 508.4 1026.8 518.8 1022.8 524.8C1018.8 530.8 1011.5 537.2 1006.2 543.0C1000.9 548.8 995.1 554.1 991.2 559.6C987.3 565.1 984.8 570.9 982.9 576.2C981.0 581.5 981.5 586.8 979.6 591.2C977.7 595.6 975.2 599.8 971.3 602.8C967.4 605.8 961.9 607.9 956.4 609.4C950.9 610.9 944.2 612.4 938.1 611.9C932.0 611.4 925.1 609.1 919.9 606.1C914.6 603.1 908.8 593.6 906.6 593.6C904.4 593.6 905.8 602.4 906.6 606.1C907.4 609.9 908.0 612.9 911.6 616.1C915.2 619.3 922.7 623.3 928.2 625.2C933.7 627.1 938.7 628.1 944.8 627.7C950.9 627.3 959.2 625.8 964.7 622.7C970.2 619.7 975.0 614.4 978.0 609.4C981.0 604.4 981.0 598.3 982.9 592.8C984.8 587.3 985.7 582.6 989.6 576.2C993.5 569.8 1000.1 561.8 1006.2 554.6C1012.3 547.4 1022.1 539.2 1026.1 533.1C1030.1 527.0 1029.5 522.4 1030.2 518.1C1030.9 513.8 1031.4 506.2 1030.2 507.3Z" fill="url(#hg)"/>
</svg>

<!-- title bar -->
<div id="titlebar"></div>
<svg class="a" style="left:2px;top:3px" width="17" height="17" viewBox="0 0 17 17"><path d="M3 0H17V13L13 17H0V3Z" fill="#19a3e1"/><path d="M11.5 5.2A4.2 4.2 0 1 0 11.5 11.8" stroke="#fff" stroke-width="2.6" fill="none"/></svg>
<div class="t" style="left:23px;top:6px;font-size:12px;letter-spacing:-0.2px">BQPI3H_pies - Ultimaker Cura</div>
<svg class="a" style="left:1795px;top:4px" width="120" height="14" viewBox="0 0 120 14">
<path d="M4 6.5H14" stroke="#111" stroke-width="1"/>
<path d="M49.5 3.6h7.5v7.5h-7.5z M52 3.6v-2.1h7.5v7.5h-2.5" stroke="#111" stroke-width="1" fill="none"/>
<path d="M95.3 1.3l9.6 9.6M104.9 1.3l-9.6 9.6" stroke="#111" stroke-width="1"/>
</svg>

<!-- menu bar -->
<div id="menubar"></div>
<div class="t" style="left:3px;top:27px;font-size:12px"><span class="u">F</span>ile</div>
<div class="t" style="left:27px;top:27px;font-size:12px"><span class="u">E</span>dit</div>
<div class="t" style="left:55px;top:27px;font-size:12px"><span class="u">V</span>iew</div>
<div class="t" style="left:89px;top:27px;font-size:12px"><span class="u">S</span>ettings</div>
<div class="t" style="left:141px;top:27px;font-size:12px">E<span class="u">x</span>tensions</div>
<div class="t" style="left:206px;top:27px;font-size:12px">P<span class="u">r</span>eferences</div>
<div class="t" style="left:278px;top:27px;font-size:12px"><span class="u">H</span>elp</div>

<!-- header -->
<div id="header"></div>
<div class="t" style="left:13px;top:52px;font-size:27px;font-weight:bold;color:#fff">Ultimaker</div>
<div class="t" style="left:144px;top:52px;font-size:27px;color:#fff;transform:scaleX(0.95);transform-origin:0 0">Cura</div>
<div class="a" style="left:798px;top:52px;width:101px;height:28px;background:#fff;border-radius:3px"></div>
<div class="t" style="left:822px;top:60px;font-size:14px;color:#0d0b4a;transform:scaleX(0.8);transform-origin:0 0">PREPARE</div>
<div class="t" style="left:929px;top:60px;font-size:14px;color:#fff;transform:scaleX(0.82);transform-origin:0 0">PREVIEW</div>
<div class="t" style="left:1037px;top:60px;font-size:14px;color:#fff;transform:scaleX(0.9);transform-origin:0 0">MONITOR</div>
<div class="btnw" style="left:1764px;top:54px;width:80px;height:24px"></div>
<div class="t" style="left:1772px;top:61px;font-size:12px;color:#fff">Marketplace</div>
<div class="btnw" style="left:1856px;top:54px;width:52px;height:24px"></div>
<div class="t" style="left:1864px;top:61px;font-size:12px;color:#fff">Sign in</div>

<!-- machine / material / print setup bar -->
<div class="a" style="left:48px;top:90px;width:48px;height:48px;background:#fff;border-radius:3px;box-shadow:0 1px 2px rgba(0,0,0,0.2)"></div>
<svg class="a" style="left:58px;top:104px" width="28" height="20" viewBox="0 0 28 20"><path d="M0.6 19.4V0.6H6L7.2 2.2H20.4V6" stroke="#0d0b4a" stroke-width="1.2" fill="none"/><path d="M6.5 6H27.7L20.6 19.5H0.6Z" fill="#0d0b4a"/></svg>
<div class="a" style="left:108px;top:90px;width:1764px;height:48px;background:#fff;border-radius:3px;box-shadow:0 1px 2px rgba(0,0,0,0.2)"></div>
<div class="a" style="left:1416px;top:90px;width:456px;height:48px;background:#efefef;border-radius:0 3px 3px 0"></div>
<div class="a" style="left:348px;top:90px;width:1px;height:48px;background:#c9c9c9"></div>
<div class="a" style="left:1415px;top:90px;width:1px;height:48px;background:#c9c9c9"></div>
<div class="t" style="left:126px;top:108px;font-size:13px;color:#0a0a0a">BQ Prusa i3 Hephestos</div>
<svg class="a" style="left:325px;top:107px" width="10" height="14" viewBox="0 0 10 14"><path d="M7.5 1.5L2 7L7.5 12.5" stroke="#555" stroke-width="1.5" fill="none"/></svg>
<svg class="a" style="left:361px;top:102px" width="24" height="25" viewBox="0 0 24 25"><path d="M2 0H22Q24 0 24 2V17Q24 19 22 19H16L12 24L8 19H2Q0 19 0 17V2Q0 0 2 0Z" fill="#fec72a"/><circle cx="12" cy="9.5" r="6" fill="#fff"/><path d="M10.6 7.3L12.3 6.2V13" stroke="#1a1a40" stroke-width="1.2" fill="none"/></svg>
<div class="t" style="left:397px;top:104px;font-size:12px;color:#0a0a0a;letter-spacing:-0.45px">Generic PLA</div>
<svg class="a" style="left:1392px;top:107px" width="10" height="14" viewBox="0 0 10 14"><path d="M7.5 1.5L2 7L7.5 12.5" stroke="#555" stroke-width="1.5" fill="none"/></svg>
<svg class="a" style="left:1430px;top:106px" width="16" height="15" viewBox="0 0 16 15"><rect x="0" y="0" width="16" height="5" fill="#0d0b4a"/><rect x="0" y="6.5" width="11" height="3" fill="#0d0b4a"/><rect x="0" y="12.5" width="6" height="2" fill="#0d0b4a"/></svg>
<div class="t" style="left:1453px;top:108px;font-size:13px;color:#0a0a0a">Fine - 0.2mm</div>
<svg class="a" style="left:1602px;top:106px" width="15" height="15" viewBox="0 0 15 15"><rect x="0.6" y="0.6" width="13.8" height="13.8" fill="none" stroke="#0d0b4a" stroke-width="1.1"/><path d="M5.1 0.6L14.4 9.9M0.6 5.1L9.9 14.4M9.9 0.6L0.6 9.9M14.4 5.1L5.1 14.4" stroke="#0d0b4a" stroke-width="0.8" fill="none"/></svg>
<div class="t" style="left:1625px;top:108px;font-size:13px;color:#0a0a0a">20%</div>
<svg class="a" style="left:1689px;top:105px" width="17" height="17" viewBox="0 0 17 17"><path d="M4.2 1.5H13.8L12.3 6.2L15.7 13.5H9" stroke="#0d0b4a" stroke-width="1" fill="none"/><path d="M4.7 1.8L5.8 6.2L4.8 9" stroke="#0d0b4a" stroke-width="0.9" fill="none"/><path d="M1 6.8H3.8V9.8H6.8V13.2H9.8V15.9H1Z" fill="#0d0b4a"/></svg>
<div class="t" style="left:1713px;top:108px;font-size:13px;color:#0a0a0a">On</div>
<svg class="a" style="left:1767px;top:105px" width="15" height="17" viewBox="0 0 15 17"><path d="M1 6.5Q2.5 6.5 3 7.3Q7.5 8.2 12 7.3Q12.5 6.5 14 6.5M1 9.5H14" stroke="#0d0b4a" stroke-width="1" fill="none"/><path d="M7.5 1V4M7.5 13V16" stroke="#0d0b4a" stroke-width="0.9"/><path d="M5.7 3L7.5 5.8L9.3 3ZM5.7 14L7.5 11.2L9.3 14Z" fill="#0d0b4a"/></svg>
<div class="t" style="left:1790px;top:108px;font-size:13px;color:#0a0a0a">On</div>
<svg class="a" style="left:1848px;top:108px" width="12" height="12" viewBox="0 0 12 12"><path d="M1 11L1.6 8.4L8.6 1.4L10.6 3.4L3.6 10.4Z" fill="#6a6a6a"/><path d="M9.2 0.8L11.2 2.8" stroke="#6a6a6a" stroke-width="1.2"/></svg>

<!-- left toolbar -->
<div class="a" style="left:-4px;top:410px;width:52px;height:294px;background:#fff;border:1px solid #d0d0d0;border-radius:3px"></div>
<div class="a" style="left:0;top:459px;width:48px;height:1px;background:#d6d6d6"></div>
<svg class="a" style="left:0;top:410px" width="48" height="49" viewBox="0 0 48 49"><path d="M15.3 13.4H33L29 20.6L35.6 36.3H12.4L18.6 20.6Z" stroke="#c9c7da" stroke-width="0.9" fill="none"/><path d="M12 25.8H20" stroke="#c9c7da" stroke-width="1.3"/><path d="M20 23L25 25.8L20 28.6Z" fill="#c9c7da"/></svg>
<div class="a" style="left:0;top:508px;width:48px;height:1px;background:#d6d6d6"></div>
<svg class="a" style="left:0;top:459px" width="48" height="49" viewBox="0 0 48 49"><path d="M17.5 14.6H33L30.1 21.75L35.6 35H12.4L19.6 21.75Z" stroke="#c9c7da" stroke-width="0.9" fill="none"/><path d="M14 21.75H24L21.5 25L25 35H12.4L16.5 25Z" fill="#c9c7da"/></svg>
<div class="a" style="left:0;top:557px;width:48px;height:1px;background:#d6d6d6"></div>
<svg class="a" style="left:0;top:508px" width="48" height="49" viewBox="0 0 48 49"><path d="M15.3 13.4H33L29 20.6L35.6 36.3H12.4L18.6 20.6Z" stroke="#c9c7da" stroke-width="0.9" fill="none"/><ellipse cx="15.3" cy="22" rx="3.6" ry="3.6" stroke="#c9c7da" stroke-width="0.9" fill="none"/><ellipse cx="32.6" cy="22" rx="3.6" ry="3.6" stroke="#c9c7da" stroke-width="0.9" fill="none"/><path d="M17 26H21" stroke="#c9c7da" stroke-width="1"/><path d="M20.5 23.5L25 26.5L20.5 29Z" fill="#c9c7da"/></svg>
<div class="a" style="left:0;top:606px;width:48px;height:1px;background:#d6d6d6"></div>
<svg class="a" style="left:0;top:557px" width="48" height="49" viewBox="0 0 48 49"><path d="M23.9 14.1H16.3L19.6 21.3L13.9 34.2H23.9Z" stroke="#c9c7da" stroke-width="0.9" fill="none"/><path d="M23.9 14.1H31.8L28.7 21.3L34.4 34.2H23.9Z" fill="#c9c7da"/><path d="M23.9 11.8V37.5" stroke="#c9c7da" stroke-width="1.1"/></svg>
<div class="a" style="left:0;top:655px;width:48px;height:1px;background:#d6d6d6"></div>
<svg class="a" style="left:0;top:606px" width="48" height="49" viewBox="0 0 48 49"><path d="M11.5 12.2H21.5L19.5 17L22.7 23.4H11L13.5 17Z" fill="#c9c7da"/><path d="M25.3 12.2H36.3L34.3 17L36.6 23.4H25L27.3 17Z" stroke="#c9c7da" stroke-width="0.6" fill="none"/><path d="M25.5 22L33 12.5M28 23L36 13M31.5 23L36.2 17.5" stroke="#c9c7da" stroke-width="0.9"/><path d="M12.4 26H21L19.8 31L22.7 37.5H11.5L13.8 31Z" stroke="#c9c7da" stroke-width="0.9" fill="none"/><path d="M25.3 26H36.3L34.3 31L36.6 37.5H25L27.3 31Z" fill="#c9c7da"/></svg>
<svg class="a" style="left:0;top:655px" width="48" height="49" viewBox="0 0 48 49"><path d="M15.5 13V35.5M19 13V35.5M22.5 13V35.5M26 13V28M29.5 13V20" stroke="#c9c7da" stroke-width="1.4"/><path d="M24.5 27.5H36V38H24.5Z" stroke="#c9c7da" stroke-width="0.8" stroke-dasharray="1.2 1.2" fill="#fff"/></svg>

<!-- object list -->
<svg class="a" style="left:61px;top:925px" width="13" height="9" viewBox="0 0 13 9"><path d="M1.5 7.5L6.5 2.5L11.5 7.5" stroke="#555" stroke-width="1.6" fill="none"/></svg>
<div class="t" style="left:86px;top:925px;font-size:12px;color:#5b5b5b">Object list</div>
<svg class="a" style="left:60px;top:951px" width="16" height="16" viewBox="0 0 16 16"><path d="M1.5 14.5L2.3 11L10.8 2.5L13.5 5.2L5 13.7Z" fill="#5a5a5a"/><path d="M11.8 1.5L12.6 0.7Q13.2 0.2 13.8 0.7L15.3 2.2Q15.8 2.8 15.3 3.4L14.5 4.2Z" fill="#5a5a5a"/><path d="M2.6 12.3L3.8 13.5" stroke="#f3f3f3" stroke-width="0.8"/></svg>
<div class="t" style="left:88px;top:953px;font-size:12px;color:#5b5b5b;letter-spacing:-0.45px">BQPI3H_pies</div>
<div class="t" style="left:60px;top:978px;font-size:11px;color:#5b5b5b">17.3 x 17.3 x 31.5 mm</div>
<svg class="a" style="left:64px;top:1007px" width="17" height="17" viewBox="0 0 17 17"><path d="M8 1L15 4.5V12.5L8 16L1 12.5V4.5Z" fill="#5f5f5f"/><path d="M1 4.5L8 8L15 4.5M8 8V16" stroke="#f3f3f3" stroke-width="1" fill="none"/></svg>
<svg class="a" style="left:94px;top:1007px" width="17" height="17" viewBox="0 0 17 17"><path d="M1.5 6.5H11.5V16H1.5Z" fill="#5f5f5f"/><path d="M1.5 6.5L5.5 2H15V11.5L11.5 16M11.5 6.5L15 2" stroke="#5f5f5f" stroke-width="1" fill="none"/></svg>
<svg class="a" style="left:124px;top:1007px" width="17" height="17" viewBox="0 0 17 17"><path d="M1.5 6.5L5.5 2H15L11.5 6.5Z" fill="#5f5f5f"/><path d="M1.5 6.5H11.5V16H1.5ZM11.5 6.5L15 2V11.5L11.5 16M5 6.5V16" stroke="#5f5f5f" stroke-width="1" fill="none"/></svg>
<svg class="a" style="left:154px;top:1007px" width="17" height="17" viewBox="0 0 17 17"><path d="M1.5 2L5 6.5V16L1.5 12Z" fill="#5f5f5f"/><path d="M1.5 2H11L15 6.5V16H5V6.5H15M5 6.5L1.5 2" stroke="#5f5f5f" stroke-width="1" fill="none"/></svg>
<svg class="a" style="left:184px;top:1007px" width="17" height="17" viewBox="0 0 17 17"><path d="M15 2L11.5 6.5V16L15 12Z" fill="#5f5f5f"/><path d="M1.5 6.5H11.5V16H1.5ZM1.5 6.5L5.5 2H15M5 6.5V16" stroke="#5f5f5f" stroke-width="1" fill="none"/></svg>

<!-- print settings panel -->
<div class="panel" style="left:1416px;top:146px;width:456px;height:498px;background:#efefef"></div>
<div class="a" style="left:1417px;top:181px;width:454px;height:402px;background:#fff;border-top:1px solid #d0d0d0"></div>
<div class="a" style="left:1417px;top:583px;width:454px;height:54px;background:#fff;border-top:1px solid #d7d7d7;border-bottom:1px solid #c8c8c8"></div>
<div class="t" style="left:1428px;top:157px;font-size:14px;color:#5c5c5c">Print settings</div>
<svg class="a" style="left:1847px;top:158px" width="14" height="13" viewBox="0 0 14 13"><path d="M1.5 1L12.5 12M12.5 1L1.5 12" stroke="#444" stroke-width="2.6"/></svg>
<div class="t" style="left:1429px;top:202px;font-size:13.5px;color:#1a1a1a">Profile</div>
<div class="a" style="left:1523px;top:195px;width:336px;height:27px;border:1px solid #c8c8c8;border-radius:2px;background:#fff"></div>
<div class="t" style="left:1535px;top:203px;font-size:12px;color:#1a1a1a">Fine <span style="color:#c4c4c4">- 0.2mm</span></div>
<svg class="a" style="left:1809px;top:201px" width="14" height="14" viewBox="0 0 14 14"><path d="M7 0.5L8.9 5H13.5L9.8 8L11.2 13L7 10L2.8 13L4.2 8L0.5 5H5.1Z" fill="#4a4a4a"/></svg>
<svg class="a" style="left:1834px;top:204px" width="14" height="10" viewBox="0 0 14 10"><path d="M1.5 2L7 7.5L12.5 2" stroke="#333" stroke-width="1.5" fill="none"/></svg>
<div class="a" style="left:1441px;top:233px;width:361px;height:30px;border:1px solid #c8c8c8;border-radius:2px;background:#fff"></div>
<svg class="a" style="left:1447px;top:241px" width="16" height="16" viewBox="0 0 16 16"><circle cx="6.3" cy="6.3" r="5" stroke="#777" stroke-width="1.3" fill="none"/><path d="M9.8 9.8L14 14" stroke="#777" stroke-width="1.5"/></svg>
<div class="t" style="left:1464px;top:243px;font-size:12px;font-style:italic;color:#9a9a9a">Search settings</div>
<svg class="a" style="left:1815px;top:242px" width="14" height="12" viewBox="0 0 14 12"><path d="M1 1.5H13M1 6H13M1 10.5H13" stroke="#333" stroke-width="1.6"/></svg>
<div class="a" style="left:1843px;top:275px;width:9px;height:116px;background:#0d0b4a;border-radius:4.5px"></div>
<div class="cat" style="top:275px;height:24px"></div>
<svg class="a" style="left:1451px;top:280px" width="16" height="16" viewBox="0 0 16 16" overflow="hidden"><rect x="0" y="0" width="16" height="5" fill="#1a1a1a"/><rect x="0" y="6.5" width="11" height="3" fill="#1a1a1a"/><rect x="0" y="12.5" width="6" height="2" fill="#1a1a1a"/></svg>
<div class="t" style="left:1484px;top:282.1px;font-size:13.5px;font-weight:bold;color:#1a1a1a">Quality</div>
<svg class="a" style="left:1810px;top:283px" width="14" height="10" viewBox="0 0 14 10"><path d="M1.5 2L7 7.5L12.5 2" stroke="#333" stroke-width="1.4" fill="none"/></svg>
<div class="t" style="left:1450px;top:308.0px;font-size:12.2px;color:#1a1a1a">Layer Height</div>
<div class="inp" style="top:302px;height:24px"></div>
<div class="t" style="left:1708px;top:308.1px;font-size:12px;color:#1a1a1a">0.2</div>
<div class="t" style="left:1809px;top:308.1px;font-size:12px;color:#9a9a9a">mm</div>
<svg class="a" style="left:1679px;top:307px" width="14" height="14" viewBox="0 0 14 14"><path d="M6 8L8 6M5.2 6.2L3 8.4Q1.4 10 3 11.4Q4.4 12.8 6 11.2L8 9.2M8.8 7.8L11 5.6Q12.6 4 11 2.6Q9.6 1.2 8 2.8L6 4.8" stroke="#555" stroke-width="1.4" fill="none"/></svg>
<div class="cat" style="top:327px;height:24px"></div>
<svg class="a" style="left:1451px;top:332px" width="16" height="16" viewBox="0 0 16 16" overflow="hidden"><path d="M2.5 1H13.5M4 1L1 15H15L12 1M4.5 1.5L3.5 14.5M11.5 1.5L12.5 14.5" stroke="#1a1a1a" stroke-width="1.1" fill="none"/></svg>
<div class="t" style="left:1484px;top:334.1px;font-size:13.5px;font-weight:bold;color:#1a1a1a">Shell</div>
<svg class="a" style="left:1810px;top:335px" width="14" height="10" viewBox="0 0 14 10"><path d="M1.5 2L7 7.5L12.5 2" stroke="#333" stroke-width="1.4" fill="none"/></svg>
<div class="t" style="left:1450px;top:360.0px;font-size:12.2px;color:#1a1a1a">Wall Thickness</div>
<div class="inp" style="top:354px;height:24px"></div>
<div class="t" style="left:1708px;top:360.1px;font-size:12px;color:#1a1a1a">1</div>
<div class="t" style="left:1809px;top:360.1px;font-size:12px;color:#9a9a9a">mm</div>
<div class="t" style="left:1467px;top:386.0px;font-size:12.2px;color:#1a1a1a">Wall Line Count</div>
<div class="inp" style="top:380px;height:24px"></div>
<div class="t" style="left:1708px;top:386.1px;font-size:12px;color:#1a1a1a">2</div>
<div class="t" style="left:1450px;top:412.0px;font-size:12.2px;color:#1a1a1a">Top/Bottom Thickness</div>
<div class="inp" style="top:406px;height:24px"></div>
<div class="t" style="left:1708px;top:412.1px;font-size:12px;color:#1a1a1a">1</div>
<div class="t" style="left:1809px;top:412.1px;font-size:12px;color:#9a9a9a">mm</div>
<div class="t" style="left:1467px;top:438.0px;font-size:12.2px;color:#1a1a1a">Top Thickness</div>
<div class="inp" style="top:432px;height:24px"></div>
<div class="t" style="left:1708px;top:438.1px;font-size:12px;color:#1a1a1a">1</div>
<div class="t" style="left:1809px;top:438.1px;font-size:12px;color:#9a9a9a">mm</div>
<div class="t" style="left:1484px;top:464.0px;font-size:12.2px;color:#1a1a1a">Top Layers</div>
<div class="inp" style="top:458px;height:24px"></div>
<div class="t" style="left:1708px;top:464.1px;font-size:12px;color:#1a1a1a">5</div>
<div class="t" style="left:1467px;top:490.0px;font-size:12.2px;color:#1a1a1a">Bottom Thickness</div>
<div class="inp" style="top:484px;height:24px"></div>
<div class="t" style="left:1708px;top:490.1px;font-size:12px;color:#1a1a1a">1</div>
<div class="t" style="left:1809px;top:490.1px;font-size:12px;color:#9a9a9a">mm</div>
<div class="t" style="left:1484px;top:516.0px;font-size:12.2px;color:#1a1a1a">Bottom Layers</div>
<div class="inp" style="top:510px;height:24px"></div>
<div class="t" style="left:1708px;top:516.1px;font-size:12px;color:#1a1a1a">5</div>
<div class="t" style="left:1450px;top:542.0px;font-size:12.2px;color:#1a1a1a">Horizontal Expansion</div>
<div class="inp" style="top:536px;height:24px"></div>
<div class="t" style="left:1708px;top:542.1px;font-size:12px;color:#1a1a1a">0</div>
<div class="t" style="left:1809px;top:542.1px;font-size:12px;color:#9a9a9a">mm</div>
<div class="cat" style="top:561px;height:22px"></div>
<svg class="a" style="left:1451px;top:566px" width="16" height="15" viewBox="0 0 16 15" overflow="hidden"><rect x="0.6" y="0.6" width="14.8" height="14.8" fill="none" stroke="#1a1a1a" stroke-width="1.1"/><path d="M5.4 0.6L15.4 10.6M0.6 5.4L10.6 15.4M10.6 0.6L0.6 10.6M15.4 5.4L5.4 15.4" stroke="#1a1a1a" stroke-width="0.8" fill="none"/></svg>
<div class="t" style="left:1484px;top:568.1px;font-size:13.5px;font-weight:bold;color:#1a1a1a">Infill</div>
<svg class="a" style="left:1810px;top:569px" width="14" height="10" viewBox="0 0 14 10"><path d="M1.5 2L7 7.5L12.5 2" stroke="#333" stroke-width="1.4" fill="none"/></svg>
<div class="a" style="left:1429px;top:595px;width:133px;height:31px;background:#efefef;border-radius:2px;box-shadow:0 1px 1px rgba(0,0,0,0.18)"></div>
<svg class="a" style="left:1442px;top:603px" width="10" height="14" viewBox="0 0 10 14"><path d="M7.5 1.5L2 7L7.5 12.5" stroke="#2466df" stroke-width="1.7" fill="none"/></svg>
<div class="t" style="left:1459px;top:604px;font-size:13px;color:#2466df">Recommended</div>
<div class="a" style="left:1635px;top:638px;width:3px;height:3px;border-radius:2px;background:#444"></div>
<div class="a" style="left:1642px;top:638px;width:3px;height:3px;border-radius:2px;background:#444"></div>
<div class="a" style="left:1649px;top:638px;width:3px;height:3px;border-radius:2px;background:#444"></div>

<!-- slice panel -->
<div class="panel" style="left:1588px;top:959px;width:311px;height:64px"></div>
<div class="a" style="left:1608px;top:976px;width:270px;height:32px;background:#2671e7;border-radius:2px"></div>
<div class="t" style="left:1729px;top:984px;font-size:14px;color:#fff">Slice</div>
</body></html>
